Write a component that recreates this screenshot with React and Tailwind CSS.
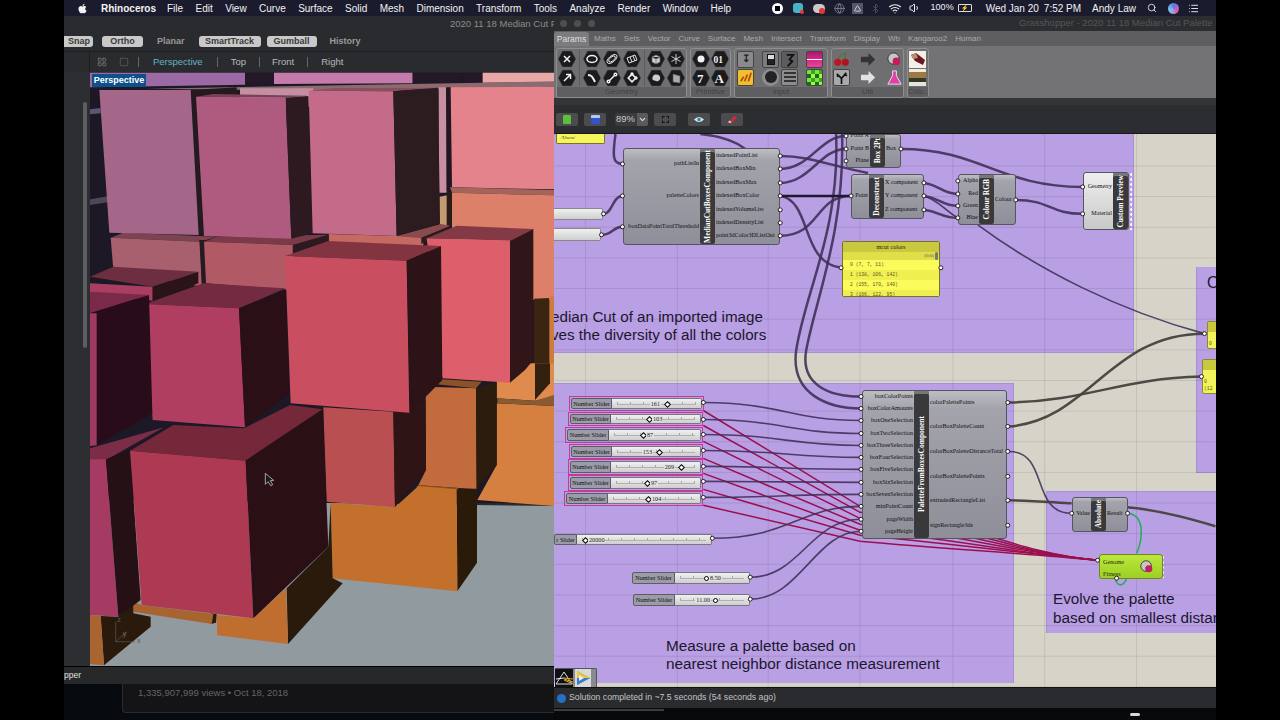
import { FaApple } from 'react-icons/fa'
import { Wifi, Volume1, Search, Bluetooth, Globe, List, ChevronDown, LayoutGrid, Square, Triangle } from 'lucide-react'

const serif = "[font-family:'Liberation_Serif',serif]"

const leftMenu = ['File', 'Edit', 'View', 'Curve', 'Surface', 'Solid', 'Mesh', 'Dimension', 'Transform', 'Tools', 'Analyze', 'Render', 'Window', 'Help']
const ghTabs = ['Maths', 'Sets', 'Vector', 'Curve', 'Surface', 'Mesh', 'Intersect', 'Transform', 'Display', 'Wb', 'Kangaroo2', 'Human']

// viewport polygons, in 3x coords with origin at page (80,70)
const backBoxes = [
  ['#1c1826', '30,8 1422,8 1422,1300 30,1300'],
  ['#5c5774', '30,118 62,114 62,130 30,133'],
  ['#4d4759', '30,388 88,378 88,396 30,405'],
  ['#9b6aa5', '30,8 495,8 495,44 30,52'],
  ['#241828', '495,8 582,8 582,42 495,44'],
  ['#c47aaa', '582,8 998,8 998,40 582,42'],
  ['#241828', '998,8 1143,8 1143,40 998,40'],
  ['#241828', '1150,8 1208,8 1208,38 1150,38'],
  ['#e9a8a8', '1208,8 1422,8 1422,36 1208,38'],
  ['#8d6a6e', '200,56 1422,34 1422,50 700,62'],
  ['#c48fa0', '480,55 700,55 700,110 480,110'],
  ['#c78fa0', '1076,52 1100,52 1100,368 1076,368'],
  ['#241620', '1098,52 1114,52 1114,362 1100,362'],
  ['#e5838c', '1112,52 1422,50 1422,358 1116,352'],
  ['#c49a70', '1078,380 1102,376 1102,466 1078,466'],
  ['#2a1c18', '1100,366 1116,366 1116,466 1100,466'],
  ['#a5645a', '1110,352 1422,360 1422,376 1116,368'],
  ['#dd8069', '1116,368 1422,376 1422,690 1116,690'],
  ['#3a2412', '1362,686 1408,684 1408,880 1362,880'],
  ['#d07a3c', '1408,680 1422,680 1422,890 1408,890'],
  ['#c46a62', '746,492 1030,500 1030,530 746,530'],
  ['#8a4b4c', '950,498 1082,462 1112,467 1025,505'],
  ['#2a1c20', '1024,503 1112,467 1112,478 1024,522'],
  ['#7d4350', '92,503 130,488 410,500 360,515'],
  ['#a85f6e', '92,503 360,515 366,650 100,600'],
  ['#241a20', '358,510 380,510 380,650 366,650'],
  ['#7a3a48', '372,515 410,500 746,494 640,525'],
  ['#2c1a20', '636,526 746,494 746,514 636,548'],
  ['#b15a65', '372,515 638,525 640,660 378,640'],
  ['#241a20', '332,60 470,52 472,76 346,78 370,495 356,495'],
  ['#a4678a', '58,60 332,60 356,495 88,488'],
  ['#7c4058', '348,80 400,72 684,77 617,83'],
  ['#af5b80', '348,80 617,83 634,506 372,498'],
  ['#2c1a20', '617,83 685,78 698,490 634,506'],
  ['#8a4f5e', '686,62 760,55 1074,53 940,64'],
  ['#c36b88', '686,62 940,64 950,498 698,490'],
  ['#2c1b1f', '940,64 1074,53 1080,462 950,498'],
]

// these are read off the lower crop, so they are shifted down 900 when drawn
const orangeBoxes = [
  ['#919a9f', '30,390 1422,408 1422,888 30,888'],
  ['#d58040', '1250,100 1422,108 1422,408 1192,390 1250,285'],
  ['#e08b4e', '1250,-20 1422,-20 1422,80 1365,92 1250,85'],
  ['#8a5a30', '1252,85 1365,92 1422,75 1422,108 1252,100'],
  ['#34200f', '1365,-20 1410,-20 1410,40 1365,90'],
  ['#8a5228', '1040,40 1085,28 1205,35 1188,55'],
  ['#c26c3d', '1037,50 1188,55 1190,358 1015,346 1038,300'],
  ['#2c1c0e', '1188,55 1250,35 1250,285 1190,356'],
  ['#2a1a0a', '1130,356 1191,356 1191,578 1132,664'],
  ['#8a5020', '1015,345 1136,354 1130,360 1008,352'],
  ['#c2702c', '752,398 945,412 1015,348 1130,358 1132,664 758,625'],
  ['#2a1a0c', '620,655 745,530 752,400 758,625 788,640 624,822'],
  ['#c06e30', '410,735 520,745 618,655 624,822 412,796'],
  ['#2a1a0c', '392,730 410,732 408,758 392,762'],
  ['#a8642e', '160,695 185,705 400,732 395,762 160,725'],
  ['#2a1a0c', '62,738 115,740 160,700 160,730 212,740 212,770 72,886'],
  ['#a9642f', '30,735 62,738 72,886 30,882'],
]

const midBoxes = [
  ['#b94f50', '730,1012 940,1025 945,1312 740,1295'],
  ['#2e1414', '940,1025 1036,990 1038,1200 945,1312'],
  ['#843a44', '1040,505 1130,467 1360,477 1290,512'],
  ['#dc5f6b', '1040,505 1290,512 1290,938 1087,925'],
  ['#301618', '1290,512 1360,477 1360,870 1335,900 1290,938'],
  ['#823540', '615,558 745,513 1083,528 980,572'],
  ['#c94f60', '615,558 980,572 988,1028 632,1000'],
  ['#2b1317', '980,572 1083,528 1087,930 990,1028'],
  ['#6c2e40', '30,620 100,590 355,605 218,650'],
  ['#aa3e60', '30,640 218,650 218,692 30,668'],
  ['#2a1418', '218,650 355,605 355,640 218,692'],
  ['#742a40', '195,702 370,640 617,655 477,715'],
  ['#b03e60', '195,702 477,715 495,1072 218,1050'],
  ['#2a1016', '477,715 617,660 628,970 495,1072'],
  ['#7a2a48', '30,665 207,675 30,730'],
  ['#280c1a', '30,730 207,675 217,1030 50,1126'],
  ['#a03a60', '30,730 50,730 50,1126 30,1128'],
  ['#7b2c46', '30,1135 252,1072 78,1170 30,1170'],
  ['#a53a63', '30,1168 78,1168 115,1640 30,1635'],
  ['#241015', '78,1168 150,1140 182,1590 115,1640'],
  ['#74283a', '150,1142 280,1065 492,1075 630,1005 728,1018 497,1172'],
  ['#ad3a52', '150,1142 497,1172 520,1645 185,1605'],
  ['#2a0f14', '497,1172 728,1018 745,1430 520,1645'],
]

const Polys = ({ list }) => list.map(([fill, points]) => <polygon key={fill + points} fill={fill} points={points} />)

function Viewport() {
  return (
    <svg viewBox="30 6 1392 1782" className="h-[594px] w-[464px]">
      <Polys list={backBoxes} />
      <g transform="translate(0 900)"><Polys list={orangeBoxes} /></g>
      <Polys list={midBoxes} />
      <path d="M107 1655V1715H165M107 1715L140 1685" fill="none" stroke="#5b5b5b" strokeWidth="2" />
      <text x="112" y="1655" fontSize="22" fill="#5b5b5b">z</text>
      <text x="128" y="1698" fontSize="22" fill="#6b6b6b">y</text>
      <text x="171" y="1718" fontSize="22" fill="#5b5b5b">x</text>
      <path d="M556 1210V1243L564 1235L572 1247L578 1244L571 1232L581 1231Z" fill="#1a1a1a" stroke="#e8e8e8" strokeWidth="2" />
    </svg>
  )
}

function RhinoWindow() {
  return (
    <div className="flex w-[490px] flex-col bg-[#2a2b2e]">
      <div className="flex h-4 items-center overflow-hidden whitespace-nowrap pl-[386px] text-[9.5px] text-[#8c8c8c]">2020 11 18 Median Cut P</div>
      <div className="flex h-[20px] items-center border-b border-[#1d1e20] text-[9px] font-bold text-[#9a9a9a]">
        <span className="flex h-[11px] w-[29px] items-center justify-end rounded-r-[3px] bg-[#c9c9c9] pr-[3px] text-[#3a3a3a]">Snap</span>
        <span className="ml-[9px] flex h-[11px] w-[41px] items-center justify-center rounded-[3px] bg-[#c9c9c9] text-[#3a3a3a]">Ortho</span>
        <span className="ml-[14px]">Planar</span>
        <span className="ml-[14px] flex h-[11px] w-[62px] items-center justify-center rounded-[3px] bg-[#c9c9c9] text-[#3a3a3a]">SmartTrack</span>
        <span className="ml-[6px] flex h-[11px] w-[50px] items-center justify-center rounded-[3px] bg-[#c9c9c9] text-[#3a3a3a]">Gumball</span>
        <span className="ml-[13px]">History</span>
      </div>
      <div className="flex h-[20px]">
        <div className="w-[26px] border-r border-[#1d1e20] bg-[#2a2b2e]" />
        <div className="flex flex-1 items-center text-[9.5px] text-[#b9b9b9]">
          <LayoutGrid className="ml-[7px] h-[10px] w-[10px] text-[#8f8f8f]" strokeWidth={1.5} />
          <Square className="ml-[12px] h-[10px] w-[10px] text-[#6a6a6a]" strokeWidth={1.5} />
          <span className="ml-[9px] h-[10px] w-px bg-[#666]" />
          <span className="ml-[14px] text-[#62b4c6]">Perspective</span>
          <span className="ml-[14px] h-[10px] w-px bg-[#666]" />
          <span className="ml-[13px]">Top</span>
          <span className="ml-[13px] h-[10px] w-px bg-[#666]" />
          <span className="ml-[12px]">Front</span>
          <span className="ml-[13px] h-[10px] w-px bg-[#666]" />
          <span className="ml-[13px]">Right</span>
        </div>
      </div>
      <div className="flex h-[594px]">
        <div className="flex w-[26px] justify-end bg-[#2c2e32] pr-[3px] pt-[30px]">
          <div className="h-[246px] w-[4px] rounded-full bg-[#5c5e62]" />
        </div>
        <div className="relative">
          <Viewport />
          <div className="absolute left-[2px] top-[2px] flex h-[13px] w-[54px] items-center justify-center bg-[#0f508c] text-[9px] font-bold text-white">Perspective</div>
        </div>
      </div>
      <div className="flex h-[18px] items-center border-t border-black bg-[#272829] text-[8.5px] text-[#e0e0e0]">pper</div>
      <div className="flex flex-1 bg-[#070b10] pl-[58px]">
        <div className="h-[29px] flex-1 rounded-bl-[4px] border-b border-l border-[#2a2b2d] bg-[#141416] pl-[15px] pt-[2px] text-[9.5px] text-[#646464]">1,335,907,999 views • Oct 18, 2018</div>
      </div>
    </div>
  )
}

// ---- grasshopper toolbox icons ----
const Hex = ({ children }) => (
  <svg viewBox="0 0 18 18" className="h-[18px] w-[18px]">
    <polygon points="4.5,1 13.5,1 17.8,9 13.5,17 4.5,17 0.2,9" fill="#1b1b1d" stroke="#555" strokeWidth=".5" />
    <g fill="none" stroke="#f2f2f2" strokeWidth="1.5">{children}</g>
  </svg>
)

const Tile = ({ className, children }) => (
  <div className={`flex h-[17px] w-[17px] items-center justify-center overflow-hidden rounded-[2px] border border-[#444] ${className}`}>{children}</div>
)

const geoIcons = [
  [<path d="M6 6l6 6M12 6l-6 6" />, <path d="M6 12l6-6M8 5.5h4.500V10" />],
  [<ellipse cx="9" cy="9" rx="5" ry="3.500" />, <path d="M5 6c4 0 5 3 7 7" strokeWidth="2" />],
  [<g strokeWidth=".9"><ellipse cx="9" cy="9" rx="6" ry="3" transform="rotate(-40 9 9)" /><ellipse cx="9" cy="9" rx="4" ry="2" transform="rotate(-40 9 9)" /></g>, <g><path d="M6 12l6-6" /><circle cx="5.500" cy="12.500" r="1.300" /><circle cx="12.500" cy="5.500" r="1.300" /></g>],
  [<path d="M4 8l8-3 2 5-8 3zM7 7l2 5M10 6l2 5" strokeWidth=".9" />, <g><rect x="6.300" y="6.300" width="5.400" height="5.400" transform="rotate(45 9 9)" /><circle cx="9" cy="5" r=".9" /><circle cx="13" cy="9" r=".9" /></g>],
]
const geoIcons2 = [
  [<path d="M5 7l4-2 4 2v5l-4 2-4-2zM5 7l4 2 4-2M9 9v5" fill="#ccc" stroke="#666" strokeWidth=".7" />, <path d="M6 7c2-2 6-2 7 1s-2 5-4 4-5 0-3-5z" fill="#ccc" stroke="none" />],
  [<path d="M9 4v10M4.500 6.500l9 5M13.500 6.500l-9 5" strokeWidth=".8" />, <path d="M6 5l7 2v7l-7-1z" fill="#aaa" stroke="#555" strokeWidth=".6" />],
]

const Group = ({ label, children, className }) => (
  <div className={`flex h-[50px] flex-col overflow-hidden rounded-[3px] border border-[#8e8e90] bg-[#6f6f71] ${className}`}>
    <div className="flex flex-1 items-center px-[1px]">{children}</div>
    <div className="h-[10px] whitespace-nowrap bg-[#5f5f61] text-center text-[7.5px] leading-[10px] text-[#414143]">{label}</div>
  </div>
)

const Col = ({ children, className = '' }) => <div className={`flex flex-col gap-[1px] ${className}`}>{children}</div>

function Toolbox() {
  return (
    <div className="flex h-[52px] gap-[3px] bg-[#737375] pl-[2px] pt-[2px]">
      <Group label="Geometry" className="w-[131px]">
        <Col><Hex>{geoIcons[0][0]}</Hex><Hex>{geoIcons[0][1]}</Hex></Col>
        <div className="mx-[3px] h-[36px] w-px bg-[#5c5c5e]" />
        <div className="flex gap-[2px]">
          <Col><Hex>{geoIcons[1][0]}</Hex><Hex>{geoIcons[1][1]}</Hex></Col>
          <Col><Hex>{geoIcons[2][0]}</Hex><Hex>{geoIcons[2][1]}</Hex></Col>
          <Col><Hex>{geoIcons[3][0]}</Hex><Hex>{geoIcons[3][1]}</Hex></Col>
        </div>
        <div className="mx-[3px] h-[36px] w-px bg-[#5c5c5e]" />
        <div className="flex gap-[2px]">
          <Col><Hex>{geoIcons2[0][0]}</Hex><Hex>{geoIcons2[0][1]}</Hex></Col>
          <Col><Hex>{geoIcons2[1][0]}</Hex><Hex>{geoIcons2[1][1]}</Hex></Col>
        </div>
      </Group>
      <Group label="Primitive" className="w-[41px]">
        <div className="flex gap-[1px]">
          <Col><Hex><circle cx="9" cy="9" r="3.500" fill="#f2f2f2" stroke="none" /></Hex><Hex><text x="5" y="14" fontSize="13" fontWeight="700" stroke="none" fill="#f2f2f2" fontFamily="Liberation Serif">7</text></Hex></Col>
          <Col><Hex><text x="2.500" y="12.500" fontSize="9.500" fontWeight="700" stroke="none" fill="#f2f2f2" fontFamily="Liberation Serif">01</text></Hex><Hex><text x="3.500" y="14" fontSize="13" fontWeight="700" stroke="none" fill="#f2f2f2" fontFamily="Liberation Serif">A</text></Hex></Col>
        </div>
      </Group>
      <Group label="Input" className="w-[94px]">
        <Col className="ml-[1px]">
          <Tile className="bg-[#8a8a8c]"><div className="text-[10px] font-bold leading-none text-[#222]">↧</div></Tile>
          <Tile className="bg-[#efc02c] text-[#a84a10]"><svg viewBox="0 0 16 16" className="h-full w-full"><path d="M3 12l3-5M7 12l3-7M11 12l3-9" stroke="#b0480f" strokeWidth="1.800" /></svg></Tile>
        </Col>
        <div className="ml-[8px] flex gap-[2px]">
          <Col>
            <Tile className="bg-[#7c7c7e]"><div className="h-[11px] w-[8px] border border-[#111] bg-[linear-gradient(#ddd_50%,#222_50%)]" /></Tile>
            <div className="flex h-[17px] w-[17px] items-center justify-center rounded-full bg-[#8d8d8f]"><div className="h-[12px] w-[12px] rounded-full bg-[#232325]" /></div>
          </Col>
          <Col>
            <Tile className="bg-[#5d5d5f]"><svg viewBox="0 0 16 16" className="h-full w-full"><path d="M5 3h7l-4 5 3 2-5 5" fill="none" stroke="#111" strokeWidth="2" /></svg></Tile>
            <Tile className="flex-col gap-[2px] bg-[#8d8d8f]"><div className="h-[2px] w-[12px] bg-[#333]" /><div className="h-[2px] w-[12px] bg-[#333]" /><div className="h-[2px] w-[12px] bg-[#333]" /></Tile>
          </Col>
        </div>
        <Col className="ml-[8px]">
          <Tile className="bg-[linear-gradient(#b0186e,#f0409a)]"><div className="h-[1px] w-full bg-white" /></Tile>
          <Tile className="bg-[conic-gradient(#2eaa2e_25%,#aef040_0_50%,#176c1e_0_75%,#7fe03a_0)] [background-size:8px_8px]" />
        </Col>
      </Group>
      <Group label="Util" className="w-[73px]">
        <Col>
          <svg viewBox="0 0 18 18" className="h-[17px] w-[17px]"><path d="M5 9C7 5 9 4 13 2M13 9c0-3 0-5 0-7" stroke="#3d7a22" strokeWidth="1" fill="none" /><circle cx="5" cy="12" r="3.800" fill="#c01622" /><circle cx="13" cy="12" r="3.800" fill="#b01420" /></svg>
          <Tile className="bg-[#a9a9ab]"><svg viewBox="0 0 16 16" className="h-full w-full"><path d="M8 15V8M8 9L3 4M8 9l5-6M5 6L3 7M11 5l3 1" stroke="#111" strokeWidth="1.800" fill="none" /></svg></Tile>
        </Col>
        <Col className="ml-[10px]">
          <svg viewBox="0 0 18 18" className="h-[17px] w-[17px]"><path d="M1 6h8V2l7 7-7 7v-4H1z" fill="#333" /></svg>
          <svg viewBox="0 0 18 18" className="h-[17px] w-[17px]"><path d="M1 6h8V2l7 7-7 7v-4H1z" fill="#e2e2e2" /></svg>
        </Col>
        <Col className="ml-[9px]">
          <svg viewBox="0 0 18 18" className="h-[17px] w-[17px]"><circle cx="8" cy="8" r="6" fill="#c6c6c6" stroke="#333" /><circle cx="11" cy="11" r="4" fill="#c41c60" /></svg>
          <svg viewBox="0 0 18 18" className="h-[17px] w-[17px]"><path d="M7 2h4v5l5 9H2l5-9z" fill="#e040a8" stroke="#e8e8e8" /></svg>
        </Col>
      </Group>
      <Group label="Colo..." className="w-[22px]">
        <Col>
          <svg viewBox="0 0 17 17" className="h-[17px] w-[17px] bg-[#f4f0e8]"><path d="M2 4l5-2 9 7-2 5-8-4z" fill="#6e1420" /><path d="M2 4l5-2 2 5-5 1z" fill="#b59070" /></svg>
          <div className="h-[17px] w-[17px] bg-[linear-gradient(#f0ece0_20%,#a07840_20%,#a07840_50%,#2e3a2a_50%,#2e3a2a_75%,#e8e4d8_75%)]" />
        </Col>
      </Group>
    </div>
  )
}

// ---- canvas, all coords are page coords, canvas origin is 554,133 ----
const cx = v => v - 554
const cy = v => v - 133

function Node({ x, y, w, h, sx, title, inputs = [], outputs = [], light }) {
  return (
    <div
      className={`absolute rounded-[3px] border border-[#55555e] ${serif} text-[6.1px] text-[#101010] ${light ? 'bg-[linear-gradient(#eeeeee,#c9c9c9)]' : 'bg-[linear-gradient(#bdbdc3_0,#a3a3ac_12%,#8f8f99_100%)]'}`}
      style={{ left: cx(x), top: cy(y), width: w, height: h }}
    >
      <div
        className="absolute top-0 flex w-[15px] items-center justify-center rounded-[2px] bg-[#39393b] shadow-[inset_0_3px_0_#77777a]"
        style={{ left: sx - x, height: h - 2 }}
      >
        <span className="whitespace-nowrap text-[7.5px] font-bold text-white [writing-mode:vertical-rl] rotate-180">{title}</span>
      </div>
      {inputs.map(([t, py]) => (
        <span key={t} className="absolute flex h-[10px] items-center justify-end whitespace-nowrap" style={{ left: 0, width: sx - x - 1, top: py - y - 6 }}>{t}</span>
      ))}
      {outputs.map(([t, py]) => (
        <span key={t} className="absolute flex h-[10px] items-center whitespace-nowrap" style={{ left: sx - x + 16, top: py - y - 6 }}>{t}</span>
      ))}
    </div>
  )
}

const sliders = [
  { x: 569, w: 135, y: 395, h: 15, lw: 41, v: '161', k: 667, before: true, sel: true },
  { x: 568, w: 135, y: 411, h: 14, lw: 41, v: '103', k: 649, sel: true },
  { x: 565, w: 138, y: 426, h: 16, lw: 42, v: '87', k: 643, sel: true },
  { x: 569, w: 134, y: 443, h: 15, lw: 41, v: '153', k: 659, before: true, sel: true },
  { x: 568, w: 135, y: 458, h: 16, lw: 41, v: '209', k: 681, before: true, sel: true },
  { x: 568, w: 135, y: 474, h: 16, lw: 41, v: '97', k: 647, sel: true },
  { x: 564, w: 139, y: 490, h: 15, lw: 42, v: '104', k: 648, sel: true },
  { x: 554, w: 158, y: 533, h: 11, lw: 23, v: '20000', k: 585, label: 'r Slider' },
  { x: 632, w: 118, y: 571, h: 12, lw: 43, v: '8.50', k: 706, round: true },
  { x: 633, w: 117, y: 593, h: 12, lw: 42, v: '11.00', k: 715, before: true, round: true },
]

function Slider({ s }) {
  const pad = s.sel ? 2 : 0
  const knob = (
    <span className={`absolute top-1/2 -mt-[2px] h-[5px] w-[5px] border border-black bg-white ${s.round ? 'rounded-full' : 'rotate-45'}`} style={{ left: s.k - s.x - pad - s.lw - 2 }} />
  )
  return (
    <div
      className={`absolute flex ${serif} ${s.sel ? 'border border-[#c43a96] p-px' : ''}`}
      style={{ left: cx(s.x), top: cy(s.y), width: s.w, height: s.h }}
    >
      <div className="flex shrink-0 items-center justify-center whitespace-nowrap rounded-l-[2px] border border-[#5c5c66] bg-[#9c9ca8] text-[6.2px] text-[#101010]" style={{ width: s.lw }}>{s.label || 'Number Slider'}</div>
      <div className="relative flex-1 rounded-r-[2px] border-y border-r border-[#77777f] bg-[linear-gradient(#f0f0f0,#cfcfcf)] text-[6.2px] text-[#222]">
        <div className="absolute inset-x-[5px] top-1/2 h-[3px] -mt-[2px] bg-[repeating-linear-gradient(90deg,#a5a5a5_0,#a5a5a5_1px,transparent_1px,transparent_13px)]" />
        <div className="absolute inset-x-[5px] top-1/2 h-px bg-[#b0b0b0]" />
        {knob}
        <span
          className="absolute top-1/2 -translate-y-1/2 bg-[#e3e3e3] px-[1px] leading-none"
          style={s.before ? { right: s.x + s.w - s.k + 3 } : { left: s.k - s.x - pad - s.lw + 3 }}
        >{s.v}</span>
      </div>
    </div>
  )
}

const purpleWires = [
  'M842 133C845 230 815 300 806 350C800 385 830 396 861 396',
  'M836 133C840 230 805 290 796 350C790 395 830 408 861 408',
  'M780 155C810 155 830 165 868 172',
  'M780 168C810 168 820 135 846 135',
  'M780 182C810 182 820 148 846 148',
  'M780 195C812 200 800 262 841 267',
  'M780 235C820 235 815 195 851 195',
  'M615 133C612 155 612 163 622 163',
  'M700 133C720 135 735 140 745 148',
  'M603 213C612 213 612 195 622 195',
  'M601 234C612 234 612 226 622 226',
  'M901 148C980 148 1000 186 1083 186',
  'M924 182C940 184 942 193 958 193',
  'M924 195C940 197 942 205 958 205',
  'M924 209C940 211 942 217 958 217',
  'M1016 199C1050 199 1050 213 1083 213',
]
const thinWires = [
  'M703 402C780 402 790 420 861 420',
  'M703 419C780 419 790 433 861 433',
  'M703 434C780 434 790 445 861 445',
  'M703 450C780 450 790 457 861 457',
  'M703 466C780 466 790 469 861 469',
  'M703 481C780 481 790 482 861 482',
  'M703 497C780 497 790 494 861 494',
  'M712 538C790 538 800 506 861 506',
  'M750 577C800 577 810 519 861 519',
  'M750 599C800 599 815 531 861 531',
  'M924 195C940 200 945 210 958 217',
  'M978 224C1040 270 1120 310 1205 333',
  'M1009 451C1050 451 1030 513 1072 513',
]
const redWires = [[410, 506], [425, 512], [441, 518], [458, 524], [473, 530], [489, 535], [505, 541]]

const panels = [
  { x: 1207, y: 320, w: 12, h: 28 },
  { x: 1202, y: 358, w: 17, h: 35 },
]

const grips = [
  [622, 163], [622, 195], [622, 226], [780, 155], [780, 168], [780, 182], [780, 195], [780, 209], [780, 222], [780, 235],
  [603, 213], [601, 234], [846, 135], [846, 148], [846, 160], [901, 148], [851, 195], [924, 182], [924, 195], [924, 209],
  [841, 267], [941, 267], [958, 180], [958, 193], [958, 205], [958, 217], [1016, 199], [1083, 186], [1083, 213],
  [703, 402], [703, 419], [703, 434], [703, 450], [703, 466], [703, 481], [703, 497], [712, 538], [750, 577], [750, 599],
  [861, 396], [861, 408], [861, 420], [861, 433], [861, 445], [861, 457], [861, 469], [861, 482], [861, 494], [861, 506], [861, 519], [861, 531],
  [1008, 402], [1008, 426], [1008, 451], [1008, 476], [1008, 500], [1008, 525], [1072, 513], [1128, 513], [1098, 560], [1117, 578], [1205, 333], [1202, 376],
]

const jag = 'bg-[radial-gradient(circle_at_right,#fff_1.5px,transparent_2px)] [background-size:4px_5px]'

function Canvas() {
  return (
    <div className="relative h-[554px] overflow-hidden border-t border-[#17171a] bg-[#d6d3c9]">
      <div className="absolute left-0 top-0 h-[219px] w-[580px] border-b border-r border-[#a98fd8] bg-[#b99fe3]" />
      <div className="absolute left-0 top-[249px] h-[300px] w-[460px] border-r border-t border-[#a98fd8] bg-[#b99fe3]" />
      <div className="absolute left-[492px] top-[357px] h-[142px] w-[175px] border-l border-t border-[#a98fd8] bg-[#b99fe3]" />
      <div className="absolute left-[642px] top-[133px] h-[206px] w-[25px] border-b border-l border-[#a98fd8] bg-[#b99fe3]" />

      <svg viewBox="554 133 662 554" className="absolute inset-0 h-full w-full" fill="none">
        <g stroke="#000" strokeOpacity=".09">
          {[585, 677, 768, 860, 953, 1045, 1137].map(v => <path key={v} d={`M${v} 133V687`} />)}
          {Array.from({ length: 18 }, (_, i) => 165 + i * 30.7).map(v => <path key={v} d={`M554 ${v}H1216`} />)}
        </g>
        <g stroke="#9c0f4f" strokeWidth="1.500">
          {redWires.map(([a, b]) => <path key={a} d={`M703 ${a}L860 ${b}C950 ${b + 8} 1010 552 1098 560`} />)}
        </g>
        <g stroke="#3c2f55" strokeOpacity=".88" strokeWidth="1.600">
          {thinWires.map(d => <path key={d} d={d} />)}
        </g>
        <g stroke="#3c2f55" strokeOpacity=".88" strokeWidth="2.500">
          {purpleWires.map(d => <path key={d} d={d} />)}
        </g>
        <path d="M780 195H851" stroke="#1f1830" strokeWidth="2.500" />
        <g stroke="#46423e" strokeOpacity=".95" strokeWidth="2.500">
          <path d="M1009 402C1090 400 1120 378 1202 376" />
          <path d="M1009 426C1090 420 1110 333 1205 333" />
          <path d="M1009 500C1040 500 1060 503 1072 503" />
          <path d="M1128 507C1160 510 1190 518 1216 526" />
        </g>
        <g stroke="#1fae5c" strokeWidth="1.500">
          <path d="M1129 513C1146 516 1143 540 1137 553" />
          <path d="M1127 578C1125 585 1118 588 1116 579" />
        </g>
      </svg>

      <div className={`absolute left-[2px] top-0 h-[10px] w-[49px] rounded-b-[2px] border border-t-0 border-[#77742a] bg-[#f6f65c] pl-[4px] text-[5px] leading-[7px] text-[#333] ${serif}`}>/Users/</div>
      <div className="absolute left-0 top-[74px] h-[12px] w-[49px] rounded-r-[2px] border border-l-0 border-[#888] bg-[linear-gradient(#f0f0f0,#cfcfcf)]" />
      <div className="absolute left-0 top-[94px] h-[13px] w-[47px] rounded-r-[2px] border border-l-0 border-[#888] bg-[linear-gradient(#f0f0f0,#cfcfcf)]" />

      <Node
        x={623} y={147} w={157} h={97} sx={699} title="MedianCutBoxesComponent"
        inputs={[['pathListIn', 163], ['paletteColors', 195], ['boxDataPointTotalThreshold', 226]]}
        outputs={[['indexedPointList', 155], ['indexedBoxMin', 168], ['indexedBoxMax', 182], ['indexedBoxColor', 195], ['indexedVolumeList', 209], ['indexedDensityList', 222], ['point3dColor3DListOut', 235]]}
      />
      <Node x={846} y={133} w={55} h={34} sx={869} title="Box 2Pt" inputs={[['Point A', 135], ['Point B', 148], ['Plane', 160]]} outputs={[['Box', 148]]} />
      <Node x={851} y={173} w={73} h={45} sx={868} title="Deconstruct" inputs={[['Point', 195]]} outputs={[['X component', 182], ['Y component', 195], ['Z component', 209]]} />
      <Node x={958} y={173} w={58} h={51} sx={978} title="Colour RGB" inputs={[['Alpha', 180], ['Red', 193], ['Green', 205], ['Blue', 217]]} outputs={[['Colour', 199]]} />
      <Node x={1083} y={171} w={46} h={58} sx={1112} title="Custom Preview" light inputs={[['Geometry', 186], ['Material', 213]]} />
      <div className={`absolute left-[574px] top-[38px] h-[58px] w-[4px] ${jag}`} />

      <div className={`absolute left-[288px] top-[107px] flex h-[56px] w-[98px] flex-col overflow-hidden rounded-[2px] border border-[#77742a] bg-[#f6f65c] ${serif}`}>
        <div className="h-[10px] bg-[#c9c83f] text-center text-[6.2px] leading-[10px] text-[#1c1c1c]">mcut colors</div>
        <div className="flex h-[10px] items-center justify-end gap-[1px] bg-[#dfdf4a] pr-[1px] text-[5px] text-[#555]">(0;0)<span className="h-[8px] w-[3px] rounded-full bg-[#777]" /></div>
        <div className="[font-family:'Liberation_Mono',monospace] text-[4.7px] leading-[10px] text-[#55551c]">
          <div className="bg-[#fbfb5c] pl-[7px]">0 (7, 7, 11)</div>
          <div className="bg-[#efef52] pl-[7px]">1 (138, 106, 142)</div>
          <div className="bg-[#fbfb5c] pl-[7px]">2 (155, 170, 149)</div>
          <div className="bg-[#efef52] pl-[7px]">3 (166, 122, 95)</div>
        </div>
      </div>

      <p className="absolute -left-[3px] top-[174px] whitespace-nowrap text-[15.2px] leading-[18px] text-[#1c1730]">edian Cut of an imported image<br />ves the diversity of all the colors</p>

      {sliders.map(s => <Slider key={s.y} s={s} />)}

      <Node
        x={862} y={389} w={145} h={149} sx={913} title="PaletteFromBoxesComponent"
        inputs={[['boxColorPoints', 396], ['boxColorAmounts', 408], ['boxOneSelection', 420], ['boxTwoSelection', 433], ['boxThreeSelection', 445], ['boxFourSelection', 457], ['boxFiveSelection', 469], ['boxSixSelection', 482], ['boxSevenSelection', 494], ['minPointCount', 506], ['pageWidth', 519], ['pageHeight', 531]]}
        outputs={[['colorPalettePoints', 402], ['colorBoxPaletteCount', 426], ['colorBoxPaletteDistanceTotal', 451], ['colorBoxPalettePoints', 476], ['extrudedRectangleList', 500], ['signRectangle3ds', 525]]}
      />
      <Node x={1072} y={496} w={56} h={35} sx={1090} title="Absolute" inputs={[['Value', 513]]} outputs={[['Result', 513]]} />

      <div className={`absolute left-[545px] top-[420px] h-[25px] w-[64px] rounded-[3px] border border-[#6c8a1c] bg-[linear-gradient(#bce63c,#9dd024)] text-[6.2px] text-[#1c2a08] ${serif}`}>
        <span className="absolute left-[3px] top-[2px]">Genome</span>
        <span className="absolute left-[3px] top-[14px]">Fitness</span>
        <svg viewBox="0 0 18 18" className="absolute right-[7px] top-[4px] h-[16px] w-[16px]"><circle cx="8" cy="8" r="6" fill="#c6c6c6" stroke="#333" /><circle cx="11" cy="11" r="4" fill="#c41c60" /></svg>
      </div>
      <div className={`absolute left-[607px] top-[421px] h-[23px] w-[3px] ${jag}`} />

      <p className="absolute left-[499px] top-[455px] whitespace-nowrap text-[15.3px] leading-[19px] text-[#1c1730]">Evolve the palette<br />based on smallest distan</p>
      <p className="absolute left-[112px] top-[503px] whitespace-nowrap text-[15.3px] leading-[18px] text-[#1c1730]">Measure a palette based on<br />nearest neighbor distance measurement</p>
      <span className="absolute left-[653px] top-[139px] text-[16px] leading-5 text-[#1c1730]">O</span>

      {panels.map(p => (
        <div key={p.y} className="absolute overflow-hidden rounded-[2px] border border-[#8a8a30] bg-[#f2f25a]" style={{ left: cx(p.x), top: cy(p.y), width: p.w, height: p.h }}>
          <div className="h-[10px] bg-[#c9c83f]" />
          <div className="[font-family:'Liberation_Mono',monospace] pl-px pt-[8px] text-[4.7px] leading-[7px] text-[#55551c]">0 (12</div>
        </div>
      ))}

      <svg viewBox="554 133 662 554" className="pointer-events-none absolute inset-0 h-full w-full">
        {grips.map(([x, y]) => <circle key={`${x}-${y}`} cx={x} cy={y} r="2" fill="#fff" stroke="#111" strokeWidth=".9" />)}
      </svg>

      <div className="absolute bottom-0 left-[1px] flex h-[19px] w-[42px] gap-[2px] rounded-tr-[2px] border-r border-t border-[#555] bg-[#8a8a8c]">
        <svg viewBox="0 0 18 18" className="h-[18px] w-[18px] bg-[#101012]"><path d="M9 3L17 15H1Z" fill="none" stroke="#ddd" /><path d="M1 10l8-1" stroke="#eee" /><path d="M9 9l9 1M9 10l9 3M9 11l9 4" stroke="#e6a82a" /></svg>
        <svg viewBox="0 0 16 18" className="h-[18px] w-[16px] bg-[#d9d9db]"><path d="M2 2L15 9L2 16Z" fill="#44b04a" /><path d="M2 9L15 9L2 16Z" fill="#3a7ad0" /><path d="M2 2L15 9H2Z" fill="#e8c83a" /><path d="M4 6L9 9L4 12Z" fill="#eee" /></svg>
      </div>
    </div>
  )
}

function GhWindow() {
  return (
    <div className="flex w-[662px] flex-col bg-[#2c2d30]">
      <div className="flex h-[15px] items-center overflow-hidden whitespace-nowrap pl-[6px] text-[9.5px] text-[#555658]">
        <div className="flex gap-[7px]">
          <span className="h-[7px] w-[7px] rounded-full bg-[#4e4f51]" />
          <span className="h-[7px] w-[7px] rounded-full bg-[#4e4f51]" />
          <span className="h-[7px] w-[7px] rounded-full bg-[#4e4f51]" />
        </div>
        <span className="ml-[424px]">Grasshopper - 2020 11 18 Median Cut Palette E</span>
      </div>
      <div className="flex h-[15px] items-end bg-[#5e5e60] text-[8px] text-[#a9a9ab]">
        <span className="flex h-[14px] w-[35px] items-center justify-center rounded-t-[3px] bg-[#7c7c7e] text-[8.5px] text-[#dedede]">Params</span>
        <div className="ml-[5px] flex h-[14px] items-center gap-[8px]">
          {ghTabs.map(t => <span key={t}>{t}</span>)}
        </div>
      </div>
      <Toolbox />
      <div className="h-[7px] bg-[#343537]" />
      <div className="flex h-[28px] items-center pl-[2px]">
        <div className="flex h-[13px] w-[22px] items-center justify-center rounded-[2px] bg-[#4c4c4e]"><div className="h-[9px] w-[8px] rounded-[1px] bg-[#5cc03c]" /></div>
        <div className="ml-[6px] flex h-[13px] w-[22px] items-center justify-center rounded-[2px] bg-[#4c4c4e]"><div className="h-[9px] w-[9px] rounded-[1px] border-t-[3px] border-[#b8c6e6] bg-[#2f55c8]" /></div>
        <div className="ml-[9px] flex h-[13px] w-[33px] items-center overflow-hidden rounded-[2px] bg-[#3a3b3d] pl-[1px] text-[9.5px] text-[#c9c9c9]">
          89%<span className="ml-auto flex h-full w-[11px] items-center justify-center bg-[#5a5a5c]"><ChevronDown className="h-[9px] w-[9px] text-[#ddd]" strokeWidth={3} /></span>
        </div>
        <div className="ml-[6px] flex h-[13px] w-[22px] items-center justify-center rounded-[2px] bg-[#4c4c4e]"><div className="h-[7px] w-[7px] border border-dashed border-[#111]" /></div>
        <div className="ml-[12px] flex h-[13px] w-[22px] items-center justify-center rounded-[2px] bg-[#4c4c4e]"><svg viewBox="0 0 12 8" className="h-[7px] w-[10px]"><path d="M0 4Q6-2 12 4Q6 10 0 4Z" fill="#cfe4ee" /><circle cx="6" cy="4" r="2" fill="#2a86b0" /></svg></div>
        <div className="ml-[11px] flex h-[13px] w-[22px] items-center justify-center rounded-[2px] bg-[#4c4c4e]"><svg viewBox="0 0 12 10" className="h-[9px] w-[11px]"><path d="M1 8L8 1L11 3L5 9Z" fill="#d22a3a" /><path d="M1 8l2-2 2 3z" fill="#eee" /></svg></div>
      </div>
      <Canvas />
      <div className="flex h-[21px] items-center border-t border-[#111] bg-[#2a2b2e] pl-[3px] text-[8.7px] text-[#c4c4c4]">
        <span className="mr-[3px] h-[9px] w-[9px] rounded-full bg-[#2470c8]" />
        Solution completed in ~7.5 seconds (54 seconds ago)
      </div>
      <div className="flex-1 bg-[#08090b] pt-[1px]">
        <div className="h-[2px] w-[110px] bg-[#3c3d3f]" />
        <div className="ml-[576px] mt-[2px] h-[3px] w-[10px] rounded-full bg-[#d8d8d8]" />
      </div>
    </div>
  )
}

function MenuBar() {
  return (
    <div className="flex h-4 items-center whitespace-nowrap bg-[#1a1c2e] pr-[17px] text-[10px] text-[#f2f2f2]">
      <FaApple className="ml-[13px] h-[11px] w-[11px]" />
      <span className="ml-[13px] font-bold">Rhinoceros</span>
      <div className="ml-[11px] flex gap-[12.4px]">
        {leftMenu.map(m => <span key={m}>{m}</span>)}
      </div>
      <div className="ml-auto flex h-4 items-center">
        <span className="flex w-[20px] justify-center"><span className="flex h-[11px] w-[11px] items-center justify-center rounded-full bg-white"><span className="h-[5px] w-[5px] bg-black" /></span></span>
        <span className="flex w-[20px] justify-center"><span className="relative h-[10px] w-[10px] rounded-[3px] bg-[#4ab0c8]"><span className="absolute -bottom-[1px] -right-[1px] h-[4px] w-[4px] rounded-full bg-[#e8362c]" /></span></span>
        <span className="flex w-[22px] justify-center"><span className="relative h-[9px] w-[12px] rounded-full bg-[#c9c9c9]"><span className="absolute -bottom-[1px] right-0 h-[6px] w-[6px] rounded-full bg-[#e8362c]" /></span></span>
        <span className="flex w-[19px] justify-center"><Globe className="h-[11px] w-[11px] text-[#7b7d88]" /></span>
        <span className="flex w-[17px] justify-center"><span className="flex h-[11px] w-[11px] items-center justify-center bg-[#545666]"><Triangle className="h-[7px] w-[7px] text-[#ddd]" strokeWidth={3} /></span></span>
        <span className="flex w-[19px] justify-center"><Bluetooth className="h-[11px] w-[11px] text-[#4d4f5c]" /></span>
        <span className="flex w-[21px] justify-center"><Wifi className="h-[13px] w-[14px]" /></span>
        <span className="flex w-[19px] justify-center"><Volume1 className="h-[12px] w-[12px]" /></span>
        <span className="ml-[6px] text-[9px]">100%</span>
        <span className="ml-[4px] flex h-[8px] w-[14px] items-center justify-center rounded-[1px] border border-[#ddd] text-[6px]">⚡</span>
        <span className="ml-[14px]">Wed Jan 20</span>
        <span className="ml-[5px]">7:52 PM</span>
        <span className="ml-[11px]">Andy Law</span>
        <Search className="ml-[11px] h-[10px] w-[10px]" />
        <span className="ml-[11px] h-[11px] w-[11px] rounded-full bg-[conic-gradient(#5a7ae8,#d85ab0,#7ac8e8,#5a7ae8)]" />
        <List className="ml-[9px] h-[11px] w-[11px]" />
      </div>
    </div>
  )
}

export default function App() {
  return (
    <div className="flex h-[720px] w-[1280px] justify-center overflow-hidden bg-black [font-family:'Liberation_Sans',sans-serif]">
      <div className="flex w-[1152px] flex-col">
        <MenuBar />
        <div className="flex flex-1">
          <RhinoWindow />
          <GhWindow />
        </div>
      </div>
    </div>
  )
}
